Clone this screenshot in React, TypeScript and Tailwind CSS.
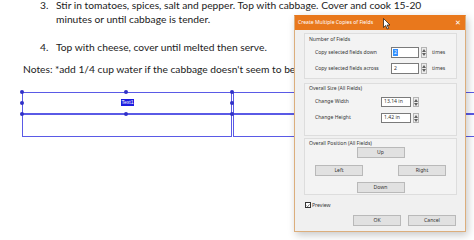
import React from "react";

function Handle({ cls }: { cls: string }) {
  return <div className={`absolute w-[4px] h-[4px] rounded-full bg-[#3030c8] ${cls}`} />;
}

function Spinner() {
  return (
    <div className="ml-[2px] w-[6px] h-full border border-[#b4b4b4] bg-[#ececec] flex flex-col items-center justify-around">
      <svg width="4" height="3" viewBox="0 0 4 3"><path d="M0 3 L2 0 L4 3 Z" fill="#606060" /></svg>
      <svg width="4" height="3" viewBox="0 0 4 3"><path d="M0 0 L2 3 L4 0 Z" fill="#606060" /></svg>
    </div>
  );
}

function Btn({ label, cls = "" }: { label: string; cls?: string }) {
  return (
    <div className={`w-[48px] h-[11px] flex items-center justify-center bg-[#e1e1e1] border border-[#b9b9b9] ${cls}`}>
      {label}
    </div>
  );
}

export default function App() {
  return (
    <div className="relative w-[474px] h-[240px] overflow-hidden bg-white">
      {/* Document */}
      <div className="flex flex-col font-['Lato',sans-serif] text-[10.25px] leading-[13.5px] text-[#222] whitespace-nowrap -mt-[1px]">
        <div className="flex pl-[40px]">
          <span className="w-[16px]">3.</span>
          <div className="flex flex-col">
            <span>Stir in tomatoes, spices, salt and pepper. Top with cabbage. Cover and cook 15-20</span>
            <span>minutes or until cabbage is tender.</span>
          </div>
        </div>
        <div className="flex pl-[40px] mt-[15px]">
          <span className="w-[16px]">4.</span>
          <span>Top with cheese, cover until melted then serve.</span>
        </div>
        <div className="pl-[23px] mt-[8.5px]">Notes: *add 1/4 cup water if the cabbage doesn't seem to be</div>

        {/* Fields */}
        <div className="ml-[22px] mt-[15px] grid grid-cols-[210px_260px] grid-rows-[22px_23px]">
          <div className="relative border border-[#5a5ae6]">
            <Handle cls="left-[-3px] top-[-3px]" />
            <Handle cls="left-[101px] top-[-3px]" />
            <Handle cls="right-[-3px] top-[-3px]" />
            <Handle cls="left-[-3px] top-[8px]" />
            <Handle cls="right-[-3px] top-[8px]" />
            <Handle cls="left-[-3px] bottom-[-3px]" />
            <Handle cls="left-[101px] bottom-[-3px]" />
            <Handle cls="right-[-3px] bottom-[-3px]" />
            <div className="absolute left-[98px] top-[6px] w-[13px] h-[7px] bg-[#1c1ce0] text-white text-[5px] leading-[7px] text-center font-['Liberation_Sans',sans-serif]">Text1</div>
          </div>
          <div className="ml-[1px] border border-[#5a5ae6]" />
          <div className="border border-[#5a5ae6]" />
          <div className="ml-[1px] border border-[#5a5ae6]" />
        </div>
      </div>

      {/* Dialog */}
      <div className="absolute left-[294px] top-[15px] w-[172px] h-[217px] flex flex-col border border-[#dcae7c] border-t-[#e9781c] bg-[#f0f0f0] shadow-[2px_3px_8px_rgba(0,0,0,0.22)] font-['Noto_Sans',sans-serif] text-[5.1px] text-[#333]">
        <div className="h-[14px] shrink-0 bg-[#e9781c] flex items-center justify-between pl-[3px] pr-[4px] text-white">
          <span>Create Multiple Copies of Fields</span>
          <span className="text-[7px]">✕</span>
        </div>
        <div className="flex flex-col pl-[9px] pr-[8px]">
          {/* Group 1 */}
          <div className="mt-[3px] h-[46px] border border-[#dddddd] bg-[#f3f3f3] flex flex-col">
            <div className="pl-[4px] pt-[1px] leading-[8px]">Number of Fields</div>
            <div className="mt-[4px] h-[11px] flex items-center pl-[10px]">
              <span className="w-[76px]">Copy selected fields down</span>
              <div className="w-[28px] h-full bg-white border border-[#7a7a7a] flex items-center pl-[1px]">
                <span className="bg-[#3390ff] text-white px-[1px]">2</span>
              </div>
              <Spinner />
              <span className="ml-[5px]">times</span>
            </div>
            <div className="mt-[5px] h-[11px] flex items-center pl-[10px]">
              <span className="w-[76px]">Copy selected fields across</span>
              <div className="w-[28px] h-full bg-white border border-[#7a7a7a] flex items-center pl-[2px]">2</div>
              <Spinner />
              <span className="ml-[5px]">times</span>
            </div>
          </div>

          {/* Group 2 */}
          <div className="mt-[4px] h-[53px] border border-[#dddddd] bg-[#f3f3f3] flex flex-col">
            <div className="pl-[4px] pt-[0px] leading-[8px]">Overall Size (All Fields)</div>
            <div className="mt-[5px] h-[10px] flex items-center pl-[10px]">
              <span className="w-[66px]">Change Width</span>
              <div className="w-[30px] h-full bg-white border border-[#7a7a7a] flex items-center pl-[2px]">13.14 in</div>
              <Spinner />
            </div>
            <div className="mt-[6px] h-[10px] flex items-center pl-[10px]">
              <span className="w-[66px]">Change Height</span>
              <div className="w-[30px] h-full bg-white border border-[#7a7a7a] flex items-center pl-[2px]">1.42 in</div>
              <Spinner />
            </div>
          </div>

          {/* Group 3 */}
          <div className="mt-[2px] h-[57px] border border-[#dddddd] bg-[#f3f3f3] flex flex-col">
            <div className="pl-[4px] pt-[1px] leading-[7px]">Overall Position (All Fields)</div>
            <div className="flex justify-center">
              <Btn label="Up" cls="h-[10px]" />
            </div>
            <div className="mt-[7px] flex justify-between px-[10px]">
              <Btn label="Left" />
              <Btn label="Right" />
            </div>
            <div className="mt-[6px] flex justify-center">
              <Btn label="Down" />
            </div>
          </div>

          {/* Preview */}
          <div className="mt-[7px] h-[6px] flex items-center gap-[1px] pl-[1px]">
            <div className="w-[6px] h-[6px] border border-[#333] bg-white flex items-center justify-center">
              <svg width="5" height="5" viewBox="0 0 5 5"><path d="M0.6 2.6 L2 4 L4.4 1" fill="none" stroke="#333" strokeWidth="0.8" /></svg>
            </div>
            <span className="leading-[6px]">Preview</span>
          </div>

          {/* Buttons */}
          <div className="mt-[7px] flex justify-end gap-[7px] pr-[1px]">
            <Btn label="OK" cls="border-[#3c84d4]" />
            <Btn label="Cancel" />
          </div>
        </div>
      </div>

      {/* Mouse cursor */}
      <svg className="absolute left-[383px] top-[18px]" width="8" height="12" viewBox="0 0 8 12">
        <path d="M0.5 0.5 L0.5 9.5 L2.7 7.5 L4.2 11 L5.6 10.4 L4.1 7 L7 7 Z" fill="white" stroke="#111" strokeWidth="0.7" strokeLinejoin="round" />
      </svg>
    </div>
  );
}
